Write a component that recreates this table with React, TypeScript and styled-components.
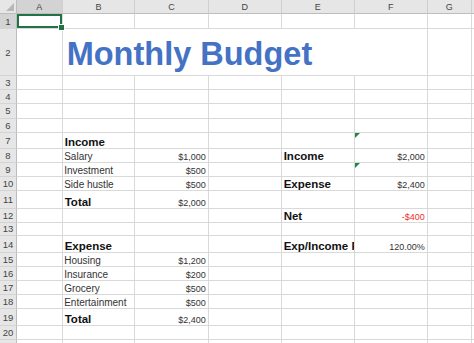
import React from 'react';
import styled, { createGlobalStyle, css } from 'styled-components';

type Kind = 'label' | 'strong' | 'num' | 'neg' | 'title';

interface CellData {
  text: string;
  kind: Kind;
  span?: number;
}

// the last column is only the sliver cut off by the window edge
const COLUMNS = ['A', 'B', 'C', 'D', 'E', 'F', 'G', ''];
const COL_WIDTHS = [45.7, 72.7, 73.3, 73, 73, 73, 44.3, 60];
const ROW_HEIGHTS = [
  15, 47, 14.2, 14.2, 14.2, 14.1, 16.6, 14, 14, 14, 17.4, 14, 13.3, 17.3, 14, 14,
  14, 14, 16.7, 14, 14,
];
const VISIBLE_ROWS = 20;

// row number -> column index -> content
const DATA: Record<number, Record<number, CellData>> = {
  2: { 1: { text: 'Monthly Budget', kind: 'title', span: 5 } },
  7: { 1: { text: 'Income', kind: 'strong' } },
  8: {
    1: { text: 'Salary', kind: 'label' },
    2: { text: '$1,000', kind: 'num' },
    4: { text: 'Income', kind: 'strong' },
    5: { text: '$2,000', kind: 'num' },
  },
  9: {
    1: { text: 'Investment', kind: 'label' },
    2: { text: '$500', kind: 'num' },
  },
  10: {
    1: { text: 'Side hustle', kind: 'label' },
    2: { text: '$500', kind: 'num' },
    4: { text: 'Expense', kind: 'strong' },
    5: { text: '$2,400', kind: 'num' },
  },
  11: {
    1: { text: 'Total', kind: 'strong' },
    2: { text: '$2,000', kind: 'num' },
  },
  12: {
    4: { text: 'Net', kind: 'strong' },
    5: { text: '-$400', kind: 'neg' },
  },
  14: {
    1: { text: 'Expense', kind: 'strong' },
    4: { text: 'Exp/Income Ratio', kind: 'strong' },
    5: { text: '120.00%', kind: 'num' },
  },
  15: { 1: { text: 'Housing', kind: 'label' }, 2: { text: '$1,200', kind: 'num' } },
  16: { 1: { text: 'Insurance', kind: 'label' }, 2: { text: '$200', kind: 'num' } },
  17: { 1: { text: 'Grocery', kind: 'label' }, 2: { text: '$500', kind: 'num' } },
  18: { 1: { text: 'Entertainment', kind: 'label' }, 2: { text: '$500', kind: 'num' } },
  19: { 1: { text: 'Total', kind: 'strong' }, 2: { text: '$2,400', kind: 'num' } },
};

// cells carrying the little green error marker
const FLAGGED = ['F7', 'F9'];

const GlobalStyle = createGlobalStyle`
  html, body {
    margin: 0;
    padding: 0;
    background: #ffffff;
    overflow: hidden;
  }
  * { box-sizing: border-box; }
`;

const Sheet = styled.div<{ $cols: string; $rows: string }>`
  display: grid;
  grid-template-columns: ${({ $cols }) => $cols};
  grid-template-rows: ${({ $rows }) => $rows};
  width: 474px;
  height: 343px;
  overflow: hidden;
  font-family: 'Liberation Sans', Arial, sans-serif;
  color: #262626;
  background: #ffffff;
`;

const Corner = styled.div`
  position: relative;
  background: #e6e6e6;
  border-right: 1px solid #bdbdbd;
  border-bottom: 1px solid #bdbdbd;
  &::after {
    content: '';
    position: absolute;
    right: 2px;
    bottom: 2px;
    border-style: solid;
    border-width: 0 0 8px 8px;
    border-color: transparent transparent #b8b8b8 transparent;
  }
`;

const ColHeader = styled.div<{ $active?: boolean }>`
  display: flex;
  align-items: center;
  justify-content: center;
  background: ${({ $active }) => ($active ? '#d3d3d3' : '#e6e6e6')};
  border-right: 1px solid #cfcfcf;
  border-bottom: 1px solid #bdbdbd;
  font-size: 9px;
  color: #444444;
`;

const RowHeader = styled.div<{ $active?: boolean }>`
  display: flex;
  align-items: center;
  justify-content: center;
  background: ${({ $active }) => ($active ? '#d3d3d3' : '#e6e6e6')};
  border-right: 1px solid #bdbdbd;
  border-bottom: 1px solid #d4d4d4;
  font-size: 9.5px;
  color: #444444;
`;

const kindStyles: Record<Kind, ReturnType<typeof css>> = {
  label: css`
    font-size: 10px;
    color: #333333;
    padding-left: 1.5px;
  `,
  strong: css`
    font-size: 11.5px;
    font-weight: 700;
    color: #111111;
    padding-left: 2px;
  `,
  num: css`
    font-size: 9px;
    color: #333333;
    justify-content: flex-end;
    padding-right: 2px;
  `,
  neg: css`
    font-size: 9px;
    color: #f0302c;
    justify-content: flex-end;
    padding-right: 2px;
  `,
  title: css`
    font-size: 32.5px;
    font-weight: 700;
    color: #4472c4;
    padding-left: 4px;
    padding-bottom: 2px;
  `,
};

const Cell = styled.div<{
  $kind?: Kind;
  $span?: number;
  $selected?: boolean;
  $flag?: boolean;
}>`
  position: relative;
  display: flex;
  align-items: flex-end;
  grid-column: span ${({ $span }) => $span ?? 1};
  border-right: 1px solid #d9d9d9;
  border-bottom: 1px solid #d9d9d9;
  white-space: nowrap;
  overflow: ${({ $selected }) => ($selected ? 'visible' : 'hidden')};
  line-height: normal;
  ${({ $kind }) => $kind && kindStyles[$kind]}

  ${({ $selected }) =>
    $selected &&
    css`
      z-index: 2;
      box-shadow: inset 0 0 0 2px #217346;
      &::after {
        content: '';
        position: absolute;
        right: -3px;
        bottom: -3px;
        width: 5px;
        height: 5px;
        background: #217346;
        border: 1px solid #ffffff;
      }
    `}

  ${({ $flag }) =>
    $flag &&
    css`
      &::before {
        content: '';
        position: absolute;
        left: 0;
        top: 0;
        border-style: solid;
        border-width: 5px 5px 0 0;
        border-color: #1f8a3a transparent transparent transparent;
      }
    `}
`;

const App: React.FC = () => {
  const cols = `17px ${COL_WIDTHS.map((w) => `${w}px`).join(' ')}`;
  const rows = `14px ${ROW_HEIGHTS.map((h) => `${h}px`).join(' ')}`;

  const body = ROW_HEIGHTS.map((_, i) => {
    const rowNo = i + 1;
    const rowData = DATA[rowNo] ?? {};
    const cells: React.ReactNode[] = [];
    let skip = 0;
    COLUMNS.forEach((letter, c) => {
      if (skip > 0) {
        skip -= 1;
        return;
      }
      const item = rowData[c];
      const ref = `${letter || 'H'}${rowNo}`;
      if (item?.span) skip = item.span - 1;
      cells.push(
        <Cell
          key={ref}
          $kind={item?.kind}
          $span={item?.span}
          $selected={ref === 'A1'}
          $flag={FLAGGED.includes(ref)}
        >
          {item?.text}
        </Cell>
      );
    });
    return (
      <React.Fragment key={rowNo}>
        <RowHeader $active={rowNo === 1}>
          {rowNo <= VISIBLE_ROWS ? rowNo : null}
        </RowHeader>
        {cells}
      </React.Fragment>
    );
  });

  return (
    <>
      <GlobalStyle />
      <Sheet $cols={cols} $rows={rows}>
        <Corner />
        {COLUMNS.map((letter, i) => (
          <ColHeader key={i} $active={letter === 'A'}>
            {letter}
          </ColHeader>
        ))}
        {body}
      </Sheet>
    </>
  );
};

export default App;
